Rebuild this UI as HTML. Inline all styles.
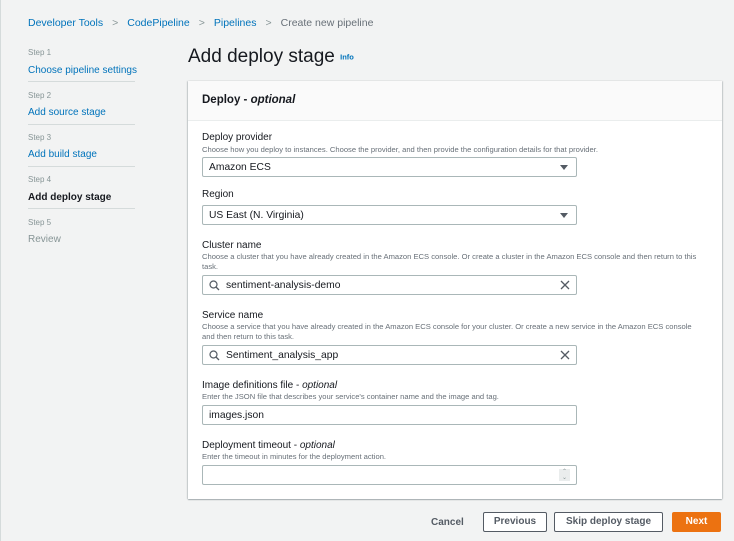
<!DOCTYPE html>
<html><head><style>
*{box-sizing:border-box;margin:0;padding:0}
body{width:734px;height:541px;background:#f2f3f3;font-family:"Liberation Sans",sans-serif;position:relative;overflow:hidden;color:#16191f;border-left:1px solid #d5dbdb}
.a{position:absolute;white-space:nowrap}
.bc{top:17px;left:27px;font-size:10.5px;color:#0073bb}
.bc span.s{color:#879596;margin:0 9px}
.bc span.g{color:#687078}
.st{font-size:8px;color:#879596;left:27px}
.sl{font-size:10px;color:#0073bb;left:27px}
.hr{position:absolute;left:27px;width:107px;height:1px;background:#d5dbdb}
.panel{position:absolute;left:187px;top:81px;width:534px;height:418px;background:#fff;box-shadow:0 1px 1px rgba(0,28,36,.3),1px 0 1px rgba(0,28,36,.15),-1px 0 1px rgba(0,28,36,.15)}
.ph{height:40px;background:#fafafa;border-bottom:1px solid #eaeded;padding:13px 14px;font-size:11.5px;font-weight:bold}
.lb{left:201px;font-size:10px;color:#16191f}
.ds{left:201px;font-size:7.6px;color:#687078;line-height:10px;white-space:normal;width:500px}
.in{position:absolute;left:201px;width:375px;height:20px;border:1px solid #aab7b8;border-radius:2px;background:#fff;font-size:10.3px;padding:4px 6px;color:#16191f}
.tri{position:absolute;right:8px;top:7px;width:0;height:0;border-left:4px solid transparent;border-right:4px solid transparent;border-top:5px solid #545b64}
.btn{position:absolute;top:512px;height:20px;border:1px solid #545b64;border-radius:2px;background:#fff;font-size:10px;font-weight:bold;color:#545b64;text-align:center;line-height:18px}
</style></head><body>
<div class="a bc">Developer Tools<span class="s">&gt;</span>CodePipeline<span class="s">&gt;</span>Pipelines<span class="s">&gt;</span><span class="g">Create new pipeline</span></div>

<div class="a st" style="top:48px">Step 1</div>
<div class="a sl" style="top:65px">Choose pipeline settings</div>
<div class="hr" style="top:81px"></div>
<div class="a st" style="top:91px">Step 2</div>
<div class="a sl" style="top:107px">Add source stage</div>
<div class="hr" style="top:124px"></div>
<div class="a st" style="top:133px">Step 3</div>
<div class="a sl" style="top:149px">Add build stage</div>
<div class="hr" style="top:166px"></div>
<div class="a st" style="top:175px">Step 4</div>
<div class="a sl" style="top:192px;color:#16191f;font-weight:bold">Add deploy stage</div>
<div class="hr" style="top:208px"></div>
<div class="a st" style="top:218px">Step 5</div>
<div class="a sl" style="top:234px;color:#879596">Review</div>

<div class="a" style="left:187px;top:46px;font-size:19px;color:#16191f">Add deploy stage <span style="font-size:7.5px;font-weight:bold;color:#0073bb;vertical-align:middle">Info</span></div>

<div class="panel"><div class="ph">Deploy - <i>optional</i></div></div>

<div class="a lb" style="top:132px">Deploy provider</div>
<div class="a ds" style="top:145px">Choose how you deploy to instances. Choose the provider, and then provide the configuration details for that provider.</div>
<div class="in" style="top:157px">Amazon ECS<div class="tri"></div></div>

<div class="a lb" style="top:189px">Region</div>
<div class="in" style="top:205px">US East (N. Virginia)<div class="tri"></div></div>

<div class="a lb" style="top:240px">Cluster name</div>
<div class="a ds" style="top:252px">Choose a cluster that you have already created in the Amazon ECS console. Or create a cluster in the Amazon ECS console and then return to this task.</div>
<div class="in" style="top:275px;padding-left:23px">sentiment-analysis-demo
<svg style="position:absolute;left:6px;top:4px" width="11" height="11" viewBox="0 0 11 11"><circle cx="4.5" cy="4.5" r="3.5" fill="none" stroke="#545b64" stroke-width="1.2"/><path d="M7 7l3 3" stroke="#545b64" stroke-width="1.3"/></svg>
<svg style="position:absolute;right:6px;top:4px" width="10" height="10" viewBox="0 0 10 10"><path d="M1 1l8 8M9 1l-8 8" stroke="#545b64" stroke-width="1.3"/></svg></div>

<div class="a lb" style="top:310px">Service name</div>
<div class="a ds" style="top:322px">Choose a service that you have already created in the Amazon ECS console for your cluster. Or create a new service in the Amazon ECS console and then return to this task.</div>
<div class="in" style="top:345px;padding-left:23px">Sentiment_analysis_app
<svg style="position:absolute;left:6px;top:4px" width="11" height="11" viewBox="0 0 11 11"><circle cx="4.5" cy="4.5" r="3.5" fill="none" stroke="#545b64" stroke-width="1.2"/><path d="M7 7l3 3" stroke="#545b64" stroke-width="1.3"/></svg>
<svg style="position:absolute;right:6px;top:4px" width="10" height="10" viewBox="0 0 10 10"><path d="M1 1l8 8M9 1l-8 8" stroke="#545b64" stroke-width="1.3"/></svg></div>

<div class="a lb" style="top:380px">Image definitions file - <i>optional</i></div>
<div class="a ds" style="top:392px">Enter the JSON file that describes your service's container name and the image and tag.</div>
<div class="in" style="top:405px">images.json</div>

<div class="a lb" style="top:440px">Deployment timeout - <i>optional</i></div>
<div class="a ds" style="top:452px">Enter the timeout in minutes for the deployment action.</div>
<div class="in" style="top:465px"><div style="position:absolute;right:6px;top:3px;width:11px;height:12px;background:#eaeded;font-size:6px;color:#879596;text-align:center;line-height:6px">⌃<br>⌄</div></div>

<div class="a" style="left:430px;top:517px;font-size:10px;font-weight:bold;color:#545b64">Cancel</div>
<div class="btn" style="left:482px;width:64px">Previous</div>
<div class="btn" style="left:553px;width:109px">Skip deploy stage</div>
<div class="btn" style="left:671px;width:49px;background:#ec7211;border-color:#ec7211;color:#fff">Next</div>
</body></html>
